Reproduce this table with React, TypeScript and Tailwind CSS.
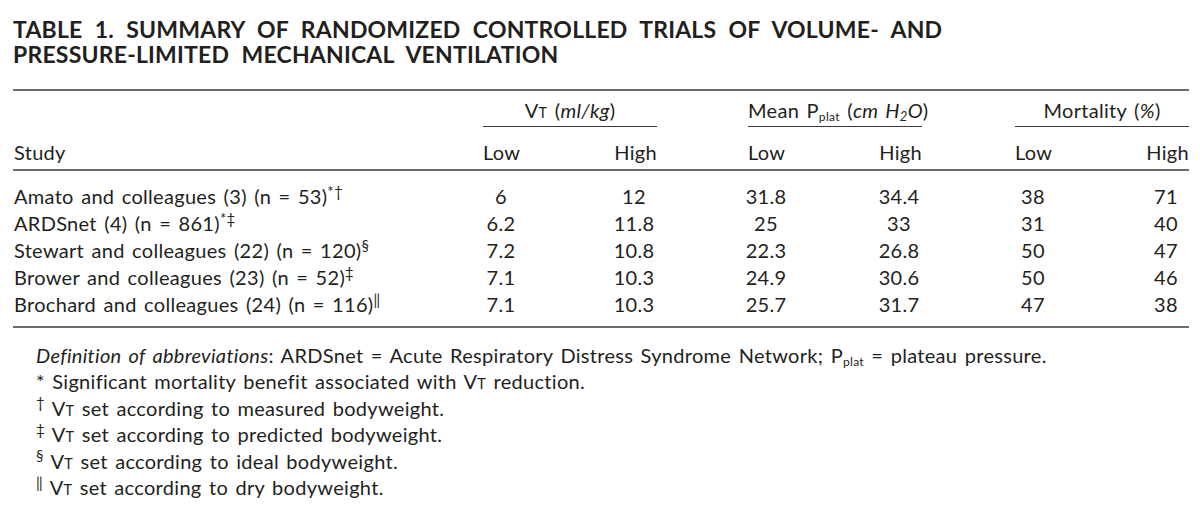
const rows = [
  { study: 'Amato and colleagues (3) (n = 53)', mark: '*†', v: ['6', '12', '31.8', '34.4', '38', '71'] },
  { study: 'ARDSnet (4) (n = 861)', mark: '*‡', v: ['6.2', '11.8', '25', '33', '31', '40'] },
  { study: 'Stewart and colleagues (22) (n = 120)', mark: '§', v: ['7.2', '10.8', '22.3', '26.8', '50', '47'] },
  { study: 'Brower and colleagues (23) (n = 52)', mark: '‡', v: ['7.1', '10.3', '24.9', '30.6', '50', '46'] },
  { study: 'Brochard and colleagues (24) (n = 116)', mark: '‖', v: ['7.1', '10.3', '25.7', '31.7', '47', '38'] },
]

const GROUP_GAP = ['', 'ml-[91px]', 'ml-[93px]']

const Vt = () => (
  <>
    V<span className="text-[0.72em] leading-none">T</span>
  </>
)

// one group of two value cells; low/high cells are centred under their header word
function Pair({ low, high, i }: { low: React.ReactNode; high: React.ReactNode; i: number }) {
  return (
    <div className={`flex w-[174px] justify-between ${GROUP_GAP[i]}`}>
      <div className="flex w-[36px] justify-center whitespace-nowrap">{low}</div>
      <div className="flex w-[46px] justify-center whitespace-nowrap">{high}</div>
    </div>
  )
}

export default function App() {
  return (
    <div className="h-[522px] w-[1200px] overflow-hidden bg-white pl-[13px] pr-[11px] pt-[17px] font-['Lato','Open_Sans',sans-serif] text-[#231f20]">
      <h1 className="text-[23px] font-bold uppercase leading-[25px] tracking-[0.2px] [word-spacing:6.5px]">
        <span className="block">Table 1. Summary of randomized controlled trials of volume- and</span>
        <span className="block">pressure-limited mechanical ventilation</span>
      </h1>

      <div className="mt-[22px] border-t-2 border-[#6b6b6b] text-[20px] tracking-[0.3px] [word-spacing:2px]">
        {/* group headers */}
        <div className="flex">
          <div className="w-[470px]" />
          {[
            <span key="vt">
              <Vt /> (<i>ml/kg</i>)
            </span>,
            <span key="pp">
              Mean P<sub className="text-[0.6em]">plat</sub> (<i>cm H<sub className="text-[0.65em]">2</sub>O</i>)
            </span>,
            <span key="mo">
              Mortality (<i>%</i>)
            </span>,
          ].map((h, i) => (
            <div
              key={i}
              className={`w-[174px] border-b-[1.5px] border-[#3a3a3a] pb-[4px] pt-[7px] text-center leading-[24px] whitespace-nowrap ${GROUP_GAP[i]}`}
            >
              {h}
            </div>
          ))}
        </div>

        {/* column headers */}
        <div className="flex border-b-2 border-[#6b6b6b] pb-[5px] pt-[13px] leading-[24px]">
          <div className="w-[470px] pl-[1px]">Study</div>
          {[0, 1, 2].map(i => (
            <div key={i} className={`flex w-[174px] justify-between ${GROUP_GAP[i]}`}>
              <span>Low</span>
              <span>High</span>
            </div>
          ))}
        </div>

        {/* body */}
        <div className="border-b-2 border-[#6b6b6b] pb-[8px] pt-[12px]">
          {rows.map(r => (
            <div key={r.study} className="flex leading-[27px]">
              <div className="w-[470px] pl-[1px]">
                {r.study}
                <sup>{r.mark}</sup>
              </div>
              {[0, 1, 2].map(i => (
                <Pair key={i} i={i} low={r.v[i * 2]} high={r.v[i * 2 + 1]} />
              ))}
            </div>
          ))}
        </div>
      </div>

      {/* footnotes */}
      <div className="pl-[23px] pt-[14px] text-[20px] leading-[26.4px] tracking-[0.3px] [word-spacing:2px]">
        <p>
          <i>Definition of abbreviations</i>: ARDSnet = Acute Respiratory Distress Syndrome Network; P
          <sub className="text-[0.6em]">plat</sub> = plateau pressure.
        </p>
        <p>
          * Significant mortality benefit associated with <Vt /> reduction.
        </p>
        <p>
          <sup>†</sup> <Vt /> set according to measured bodyweight.
        </p>
        <p>
          <sup>‡</sup> <Vt /> set according to predicted bodyweight.
        </p>
        <p>
          <sup>§</sup> <Vt /> set according to ideal bodyweight.
        </p>
        <p>
          <sup>‖</sup> <Vt /> set according to dry bodyweight.
        </p>
      </div>
    </div>
  )
}
